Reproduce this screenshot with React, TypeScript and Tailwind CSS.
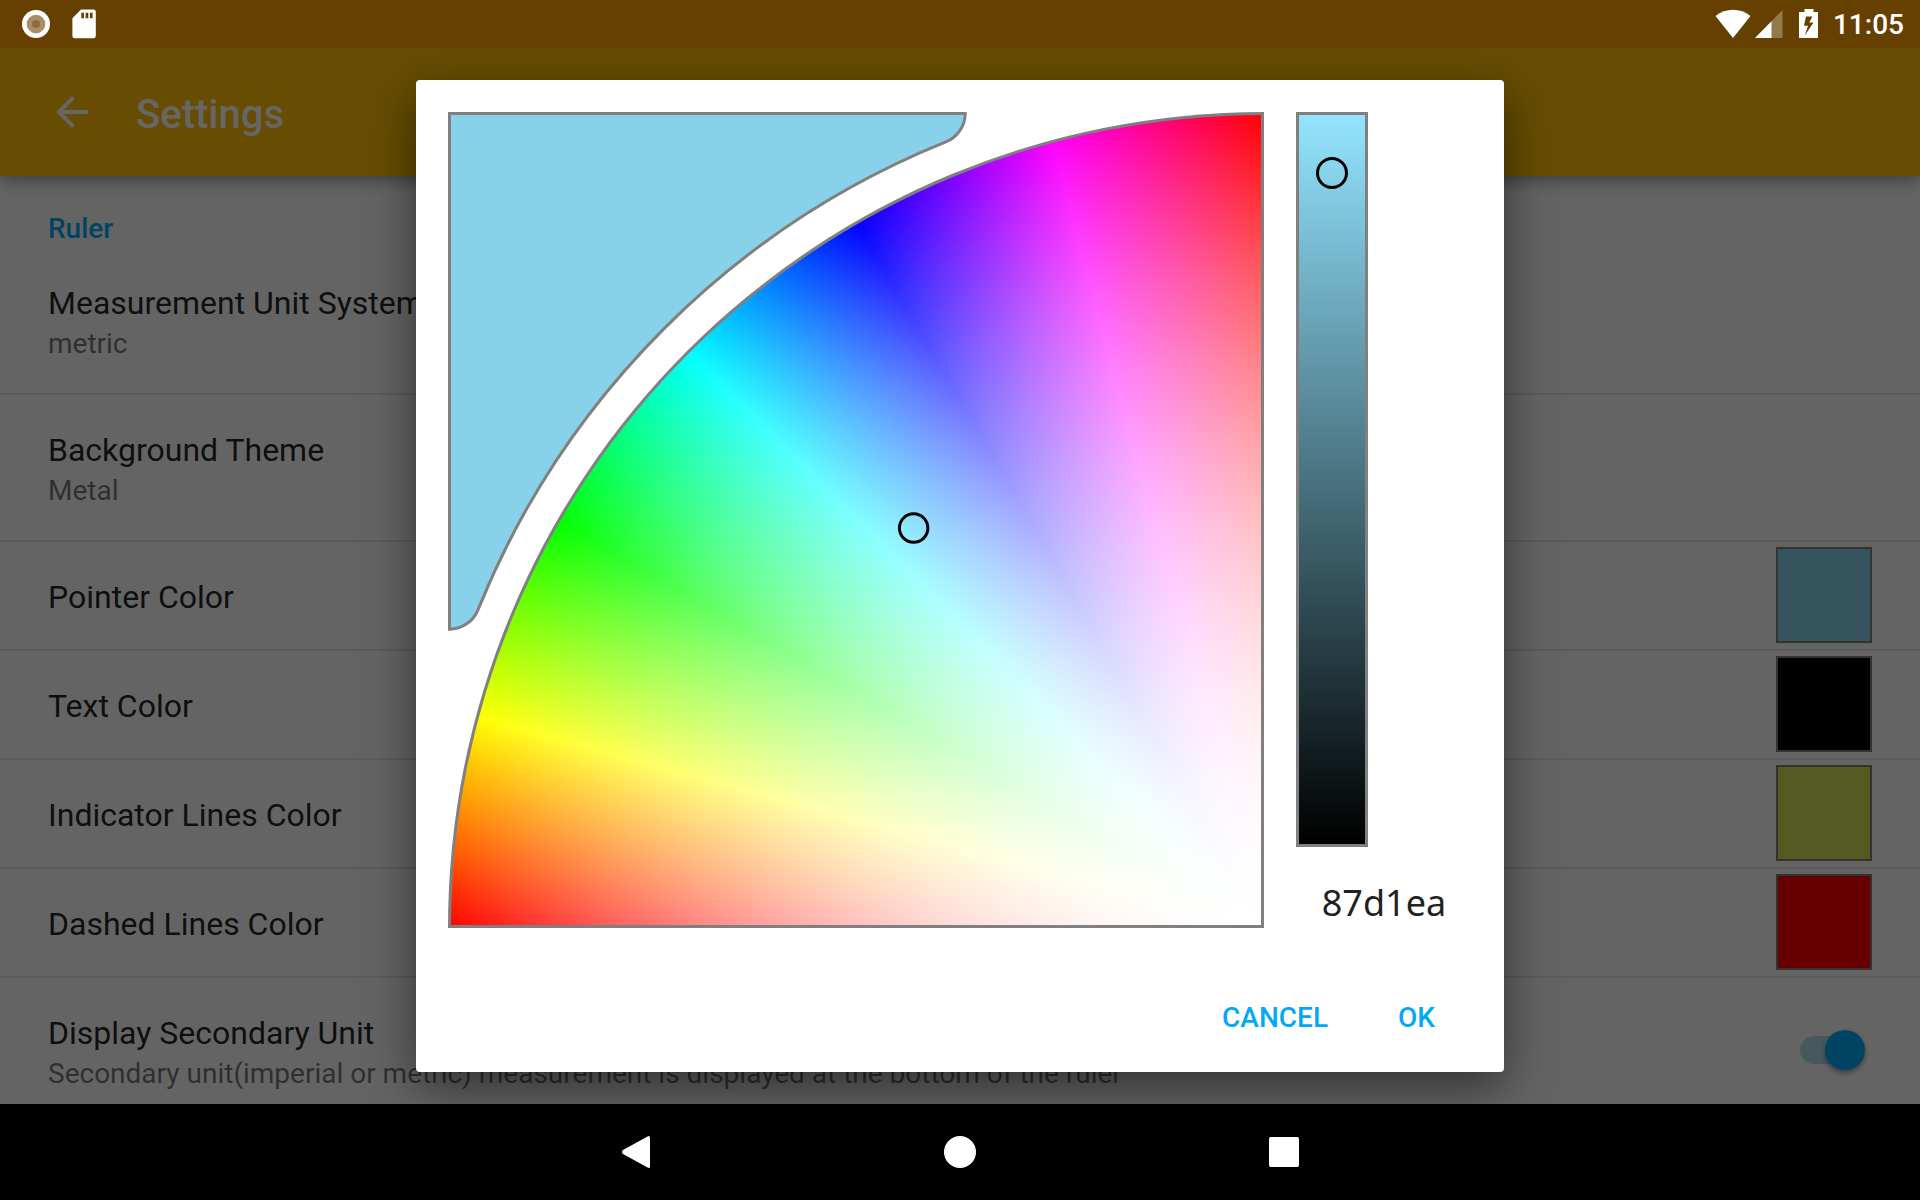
import React from "react";

type Preference = {
  title: string;
  summary?: string;
  swatch?: string;
  toggle?: boolean;
};

const preferences: Preference[] = [
  { title: "Measurement Unit System", summary: "metric" },
  { title: "Background Theme", summary: "Metal" },
  { title: "Pointer Color", swatch: "bg-[#87d1ea]" },
  { title: "Text Color", swatch: "bg-black" },
  { title: "Indicator Lines Color", swatch: "bg-[#d4e157]" },
  { title: "Dashed Lines Color", swatch: "bg-[#ff0000]" },
  {
    title: "Display Secondary Unit",
    summary: "Secondary unit(imperial or metric) measurement is displayed at the bottom of the ruler",
    toggle: true,
  },
];

const StatusBar: React.FC = () => (
  <div className="flex h-12 shrink-0 items-center justify-between bg-[#664000] pl-5 pr-4 text-white">
    <div className="flex items-center gap-4">
      <svg viewBox="0 0 32 32" className="size-8">
        <circle cx="16" cy="16" r="14" fill="#fff" />
        <circle cx="16" cy="16" r="9.3" fill="#a98e67" />
        <circle cx="16" cy="16" r="4" fill="#8b6d3b" />
      </svg>
      <svg viewBox="0 0 32 32" className="size-8">
        <path
          fill="#fff"
          fillRule="evenodd"
          d="M13 1.500H25.500a2.300 2.300 0 0 1 2.300 2.300V28a2.300 2.300 0 0 1-2.300 2.300H6.700A2.300 2.300 0 0 1 4.400 28V10.200ZM13.300 4.700V10.300h2.700V4.700ZM17.600 4.700V10.300h2.700V4.700ZM21.900 4.700V10.300h2.700V4.700Z"
        />
      </svg>
    </div>
    <div className="flex items-center">
      <svg viewBox="0 0 36 32" className="h-8 w-9">
        <path fill="#fff" d="M0.500 8C11-0.500 25-0.500 35.500 8L18 30Z" />
      </svg>
      <svg viewBox="0 0 32 32" className="ml-1 h-8 w-8">
        <path fill="#fff" fillOpacity="0.3" d="M27.500 2V30H0Z" />
        <path fill="#fff" d="M16.500 13.200V30H0Z" />
      </svg>
      <svg viewBox="0 0 20 32" className="ml-3 h-8 w-5">
        <path
          fill="#fff"
          fillRule="evenodd"
          d="M5.500 1h9v3H19v26H0V4h5.500ZM7 8.500 5 17.700h4L5.800 27.500 14.500 14.500H10.200L13.500 8.500Z"
        />
      </svg>
      <time className="ml-3.5 pt-0.5 text-[28px] leading-8 font-medium">11:05</time>
    </div>
  </div>
);

const AppBar: React.FC = () => (
  <header className="z-10 flex h-32 shrink-0 items-center bg-[#ffc107] px-12 text-white shadow-[0_4px_16px_rgba(0,0,0,0.4)]">
    <button type="button" aria-label="Back">
      <svg viewBox="0 0 24 24" fill="currentColor" className="size-12">
        <path d="M20 11H7.830l5.590-5.590L12 4l-8 8 8 8 1.410-1.410L7.830 13H20v-2z" />
      </svg>
    </button>
    <h1 className="ml-10 pt-1.5 text-[40px] leading-12 font-medium">Settings</h1>
  </header>
);

const PreferenceRow: React.FC<{ item: Preference }> = ({ item }) => (
  <li className={`flex shrink-0 items-center justify-between border-b-2 border-[#e0e0e0] px-12 ${item.swatch ? "h-[109px]" : "h-[147px]"}`}>
    <div className="pt-[3px]">
      <label htmlFor={item.title} className="block text-[32px] leading-[38px] text-black/87">{item.title}</label>
      {item.summary && <p className="mt-[5px] text-[28px] leading-[33px] text-black/54">{item.summary}</p>}
    </div>
    {item.swatch && (
      <button type="button" id={item.title} className={`mb-px size-24 border-2 border-[#7f7f7f] ${item.swatch}`} />
    )}
    {item.toggle && (
      <input
        type="checkbox"
        role="switch"
        id={item.title}
        defaultChecked
        className="relative mr-2 mb-px h-7 w-16 appearance-none rounded-full bg-[#b4dcee] before:absolute before:-top-1.5 before:right-[-1px] before:size-10 before:rounded-full before:bg-[#03a9f4] before:shadow-[0_3px_5px_rgba(0,0,0,0.4)]"
      />
    )}
  </li>
);

const ColorWheel: React.FC = () => (
  <div className="relative aspect-square min-w-0 flex-1">
    {/* hue sweeps over the quarter turn, white fades out with the square of the radius */}
    <div className="size-full rounded-tl-[100%] border-3 border-[#808080] bg-origin-border bg-[radial-gradient(circle_farthest-side_at_100%_100%,#fff,rgb(255_255_255/0.99)_10%,rgb(255_255_255/0.96)_20%,rgb(255_255_255/0.91)_30%,rgb(255_255_255/0.84)_40%,rgb(255_255_255/0.75)_50%,rgb(255_255_255/0.64)_60%,rgb(255_255_255/0.51)_70%,rgb(255_255_255/0.36)_80%,rgb(255_255_255/0.19)_90%,rgb(255_255_255/0)_100%),conic-gradient(from_270deg_at_100%_100%,#f00,#ff0_15deg,#0f0_30deg,#0ff_45deg,#00f_60deg,#f0f_75deg,#f00_90deg)]" />
    <svg viewBox="-1 -1 814 814" className="absolute inset-0 size-full overflow-visible" fill="none">
      <path
        d="M0.500 0.500H515A31 31 0 0 1 495.600 28.900A845 845 0 0 0 28.900 495.600A31 31 0 0 1 0.500 515Z"
        fill="#87d1ea"
        stroke="#808080"
        strokeWidth="3"
      />
      <circle cx="463.500" cy="414" r="14.200" stroke="#000" strokeWidth="3" />
    </svg>
  </div>
);

const ColorDialog: React.FC = () => (
  <div
    role="dialog"
    aria-label="Pointer Color"
    className="w-[1088px] max-w-full rounded bg-white p-8 pb-0 shadow-[0_16px_48px_rgba(0,0,0,0.5)]"
  >
    <div className="flex items-start gap-8">
      <ColorWheel />
      <div className="flex w-44 flex-col">
        <div className="relative h-[735px] w-18 border-3 border-[#808080] bg-[linear-gradient(#93e4ff,#000)]">
          <input
            type="range"
            aria-label="Brightness"
            min={0}
            max={255}
            defaultValue={234}
            className="absolute inset-x-0 -top-[18px] h-[765px] w-full appearance-none bg-transparent [direction:rtl] [writing-mode:vertical-lr] [&::-webkit-slider-thumb]:size-8 [&::-webkit-slider-thumb]:appearance-none [&::-webkit-slider-thumb]:rounded-full [&::-webkit-slider-thumb]:border-3 [&::-webkit-slider-thumb]:border-black"
          />
        </div>
        <input
          type="text"
          aria-label="Hex color"
          defaultValue="87d1ea"
          className="mt-8 h-12 w-full text-center font-['Noto_Sans',sans-serif] text-[36px] text-[#212121] outline-none"
        />
      </div>
    </div>
    <div className="flex h-36 items-center justify-end gap-[70px] pt-9 pr-[37px] text-[28px] leading-8 font-medium text-[#03a9f4]">
      <button type="button">CANCEL</button>
      <button type="button">OK</button>
    </div>
  </div>
);

const NavBar: React.FC = () => (
  <nav className="flex h-24 shrink-0 items-center justify-center bg-black">
    <button type="button" aria-label="Back" className="flex w-81 justify-center">
      <svg viewBox="0 0 32 32" className="size-8">
        <path fill="#fff" d="M28.500 0Q30 0 30 1.500V30.500Q30 32 28.500 32L3 18Q1 16 3 14Z" />
      </svg>
    </button>
    <button type="button" aria-label="Home" className="flex w-81 justify-center">
      <span className="size-8 rounded-full bg-white" />
    </button>
    <button type="button" aria-label="Recent apps" className="flex w-81 justify-center">
      <span className="size-[30px] rounded-xs bg-white" />
    </button>
  </nav>
);

const App: React.FC = () => {
  return (
    <div className="flex h-screen flex-col overflow-hidden font-[Roboto,sans-serif]">
      <StatusBar />
      <main className="relative flex min-h-0 flex-1 flex-col overflow-hidden bg-[#fafafa]">
        <AppBar />
        <h2 className="h-[72px] shrink-0 px-12 pt-[37px] text-[28px] leading-8 font-medium text-[#03a9f4]">Ruler</h2>
        <ul className="flex min-h-0 flex-1 flex-col overflow-hidden">
          {preferences.map((item) => (
            <PreferenceRow key={item.title} item={item} />
          ))}
        </ul>
        <div className="absolute inset-0 z-20 flex items-center justify-center bg-black/60">
          <ColorDialog />
        </div>
      </main>
      <NavBar />
    </div>
  );
};

export default App;
